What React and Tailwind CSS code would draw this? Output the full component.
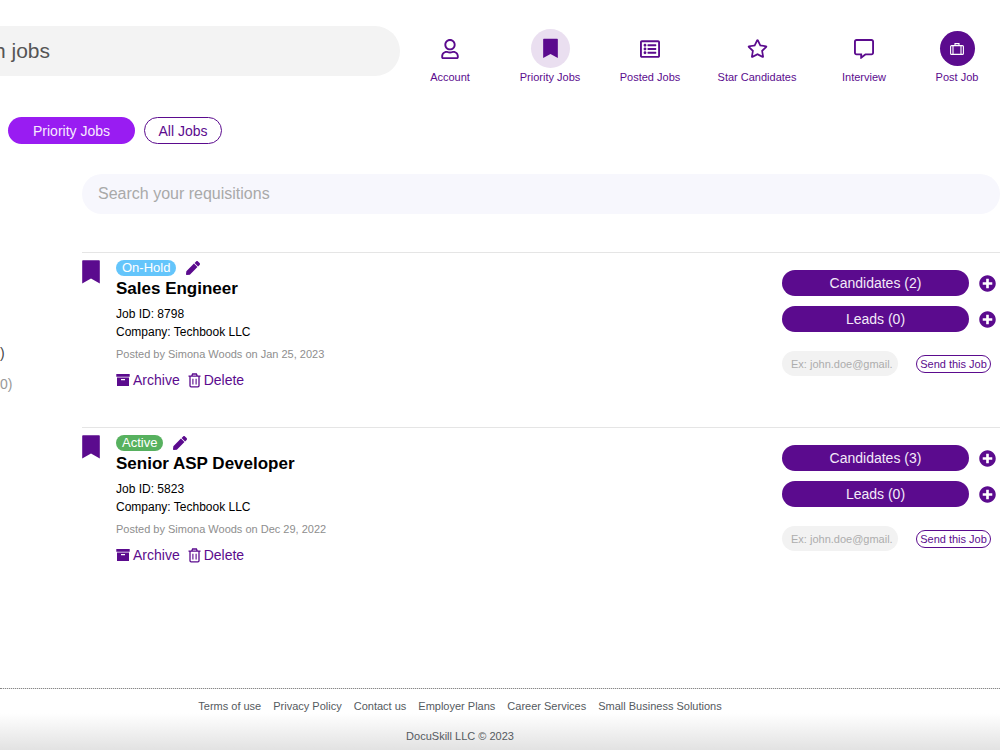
import { useState } from "react";
import {
  FaPen,
  FaPlusCircle,
  FaRegCommentAlt,
  FaRegListAlt,
  FaRegStar,
  FaRegUser,
} from "react-icons/fa";

const jobs = [
  {
    id: 8798,
    title: "Sales Engineer",
    status: "On-Hold",
    company: "Techbook LLC",
    posted: "Posted by Simona Woods on Jan 25, 2023",
    candidates: 2,
    leads: 0,
  },
  {
    id: 5823,
    title: "Senior ASP Developer",
    status: "Active",
    company: "Techbook LLC",
    posted: "Posted by Simona Woods on Dec 29, 2022",
    candidates: 3,
    leads: 0,
  },
];

const footerLinks = [
  "Terms of use",
  "Privacy Policy",
  "Contact us",
  "Employer Plans",
  "Career Services",
  "Small Business Solutions",
];

const BookmarkIcon = ({ className }) => (
  <svg viewBox="0 0 18 24" fill="currentColor" className={className} aria-hidden="true">
    <path d="M1 0.3h16a.8.8 0 0 1 .8.8v22.3L9 18.6.2 23.4V1.1A.8.8 0 0 1 1 .3z" />
  </svg>
);

const ArchiveIcon = () => (
  <svg width="14" height="14" viewBox="0 0 14 14" fill="currentColor" aria-hidden="true">
    <path d="M.3 1h13.4v2.7H.3zM1 4.6h12v8.4H1zM5 6v1.3h4V6z" fillRule="evenodd" />
  </svg>
);

const TrashIcon = () => (
  <svg width="13" height="15" viewBox="0 0 13 15" fill="none" stroke="currentColor" aria-hidden="true">
    <path d="M.5 3.2h12M3.6 3.2l1-2.2h3.8l1 2.2M2 3.2v9.6c0 .7.4 1.1 1.1 1.1h6.8c.7 0 1.1-.4 1.1-1.1V3.2" strokeWidth="1.3" />
    <path d="M4.9 5.8v5.6M8.1 5.8v5.6" strokeWidth="1.1" />
  </svg>
);

const SuitcaseIcon = () => (
  <svg width="16" height="16" viewBox="0 0 16 16" fill="none" stroke="currentColor" aria-hidden="true">
    <rect x="1.6" y="4.6" width="12.8" height="8.8" rx="1" strokeWidth="1.1" />
    <path d="M6 4.6V2.6h4v2M4 4.6v8.8M12 4.6v8.8" strokeWidth="1.1" />
  </svg>
);

const NavItem = ({ label, width, circle, children }) => (
  <a href="#" className={`flex flex-col items-center gap-px text-[#5b0b8e] ${width}`}>
    <span className="flex h-[39px] items-center justify-center">
      <span className={`flex items-center justify-center rounded-full ${circle || ""}`}>{children}</span>
    </span>
    <span className="text-[11px] leading-4 whitespace-nowrap">{label}</span>
  </a>
);

const Header = () => (
  <header className="flex items-start pt-[26px]">
    <input
      type="text"
      aria-label="Search jobs"
      placeholder="h jobs"
      className="-ml-2 h-[50px] min-w-0 flex-1 rounded-r-full bg-[#f3f3f3] pl-0.5 text-[21px] text-[#555] outline-none placeholder:text-[#555]"
    />
    <nav className="flex shrink-0 pt-[3px]">
      <NavItem label="Account" width="w-[100px]">
        <FaRegUser size={20} />
      </NavItem>
      <NavItem label="Priority Jobs" width="w-[100px]" circle="size-[39px] bg-[#eadff0]">
        <BookmarkIcon className="h-[21px] w-[15px]" />
      </NavItem>
      <NavItem label="Posted Jobs" width="w-[100px]">
        <FaRegListAlt size={20} />
      </NavItem>
      <NavItem label="Star Candidates" width="w-[114px]">
        <FaRegStar size={21} />
      </NavItem>
      <NavItem label="Interview" width="w-[100px]">
        <FaRegCommentAlt size={20} />
      </NavItem>
      <NavItem label="Post Job" width="w-[86px]" circle="size-[35px] bg-[#5b0b8e] text-white">
        <SuitcaseIcon />
      </NavItem>
    </nav>
  </header>
);

const CountButton = ({ label, addLabel }) => (
  <div className="flex items-center gap-2.5">
    <button type="button" className="h-[26px] w-[187px] rounded-full bg-[#5b0b8e] text-sm text-[#f3eaf8]">
      {label}
    </button>
    <button type="button" aria-label={addLabel} className="text-[#5b0b8e]">
      <FaPlusCircle size={17} />
    </button>
  </div>
);

const JobRow = ({ job }) => {
  const [email, setEmail] = useState("");

  return (
    <li className="flex min-h-[175px] items-start border-t border-[#e5e5e5] pt-[7px]">
      <BookmarkIcon className="h-6 w-[18px] shrink-0 text-[#5b0b8e]" />

      <div className="ml-4 flex-1">
        <div className="flex h-4 items-center gap-2.5">
          <span
            className={`rounded-full px-1.5 text-[13px] leading-4 text-white ${
              job.status === "Active" ? "bg-[#57b15f]" : "bg-[#64c5fb]"
            }`}
          >
            {job.status}
          </span>
          <button type="button" aria-label="Edit status" className="text-[#5b0b8e]">
            <FaPen size={14} />
          </button>
        </div>
        <h2 className="mt-px text-[17px] leading-6 font-bold text-black">{job.title}</h2>
        <div className="mt-1 text-xs leading-[18px] text-black">
          <p>Job ID: {job.id}</p>
          <p>Company: {job.company}</p>
        </div>
        <p className="mt-1 text-[11px] leading-[18px] text-[#8e8e8e]">{job.posted}</p>
        <div className="mt-2 flex gap-2 text-sm leading-[18px] text-[#5b0b8e]">
          <button type="button" className="flex items-center gap-[3px]">
            <ArchiveIcon />
            Archive
          </button>
          <button type="button" className="flex items-center gap-[3px]">
            <TrashIcon />
            Delete
          </button>
        </div>
      </div>

      <div className="w-[218px] shrink-0 pt-2.5">
        <div className="space-y-2.5">
          <CountButton label={`Candidates (${job.candidates})`} addLabel="Add candidate" />
          <CountButton label={`Leads (${job.leads})`} addLabel="Add lead" />
        </div>
        <div className="mt-[19px] flex items-center">
          <input
            type="email"
            aria-label="Email address"
            placeholder="Ex: john.doe@gmail."
            value={email}
            onChange={(e) => setEmail(e.target.value)}
            className="h-[25px] w-[116px] rounded-full bg-[#f2f2f2] pl-[9px] text-[11px] outline-none placeholder:text-[#adadad]"
          />
          <button
            type="button"
            className="ml-[18px] h-[18px] w-[75px] rounded-full border border-[#5b0b8e] text-[11px] leading-4 whitespace-nowrap text-[#5b0b8e]"
          >
            Send this Job
          </button>
        </div>
      </div>
    </li>
  );
};

const Footer = () => (
  <footer className="mt-auto border-t border-dotted border-[#888] bg-linear-to-b from-white from-40% to-[#e2e2e2] pt-2 pr-20 pb-[5px] text-center text-[11px] leading-[18px] text-[#555a60]">
    <nav className="flex justify-center gap-3">
      {footerLinks.map((link) => (
        <a key={link} href="#">
          {link}
        </a>
      ))}
    </nav>
    <p className="mt-3">DocuSkill LLC © 2023</p>
  </footer>
);

const App = () => {
  return (
    <div className="flex min-h-screen flex-col overflow-hidden bg-white font-['Liberation_Sans',Arial,sans-serif]">
      <Header />

      <div className="mt-8 flex gap-[9px] pl-2 text-sm">
        <button type="button" className="h-[27px] w-[127px] rounded-full bg-[#991cf2] text-[#f7eafe]">
          Priority Jobs
        </button>
        <button type="button" className="h-[27px] w-[78px] rounded-full border border-[#5b0b8e] text-[#5b0b8e]">
          All Jobs
        </button>
      </div>

      <div className="flex pt-[30px]">
        <aside className="w-[82px] shrink-0 space-y-[11px] pt-[169px] text-sm leading-5">
          <p className="text-[#444]">)</p>
          <p className="text-[#999]">0)</p>
        </aside>

        <main className="min-w-0 flex-1">
          <input
            type="search"
            aria-label="Search your requisitions"
            placeholder="Search your requisitions"
            className="h-10 w-full rounded-full bg-[#f7f7fd] px-4 text-base outline-none placeholder:text-[#a9a9a9]"
          />
          <ul className="mt-[38px]">
            {jobs.map((job) => (
              <JobRow key={job.id} job={job} />
            ))}
          </ul>
        </main>
      </div>

      <Footer />
    </div>
  );
};

export default App;
